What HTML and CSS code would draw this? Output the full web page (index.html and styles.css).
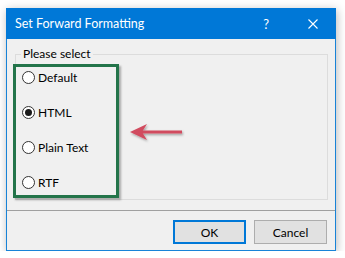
FILE: index.html
```html
<!DOCTYPE html>
<html>
<head>
<meta charset="utf-8">
<link rel="stylesheet" href="styles.css">
</head>
<body>
<div class="window">
  <div class="titlebar">
    <span class="title">Set Forward Formatting</span>
    <span class="help">?</span>
    <svg class="close" width="10" height="10" viewBox="0 0 10 10"><path d="M0.5 0.5 L9.5 9.5 M9.5 0.5 L0.5 9.5" stroke="#fff" stroke-width="1.1" fill="none"/></svg>
  </div>
  <div class="content">
    <div class="group">
      <span class="legend">Please select</span>
      <div class="options">
        <label class="opt"><span class="radio"></span><span>Default</span></label>
        <label class="opt"><span class="radio checked"></span><span>HTML</span></label>
        <label class="opt"><span class="radio"></span><span>Plain Text</span></label>
        <label class="opt"><span class="radio"></span><span>RTF</span></label>
      </div>
      <svg class="arrow" width="60" height="24" viewBox="0 0 60 24">
        <defs>
          <filter id="sh" x="-20%" y="-40%" width="140%" height="180%">
            <feDropShadow dx="1" dy="1.5" stdDeviation="0.8" flood-color="#000" flood-opacity="0.35"/>
          </filter>
        </defs>
        <g filter="url(#sh)" fill="#d14b5f">
          <rect x="14" y="9.5" width="40" height="3"/>
          <path d="M2 11 L19 3 L14 11 L19 19 Z"/>
        </g>
      </svg>
    </div>
  </div>
  <div class="footer">
    <button class="btn default">OK</button>
    <button class="btn">Cancel</button>
  </div>
</div>
</body>
</html>
```
FILE: styles.css
```css
* { box-sizing: border-box; }
body {
  margin: 0;
  background: #ffffff;
  font-family: Lato, "Noto Sans", sans-serif;
  font-size: 12px;
  color: #000;
}
.window {
  margin: 8px 0 0 6px;
  width: 330px;
  height: 243px;
  border: 1px solid #1883d7;
  background: #f0f0f0;
  display: flex;
  flex-direction: column;
  box-shadow: 1px 2px 9px rgba(0,0,0,0.28);
}
.titlebar {
  height: 31px;
  margin: -1px -1px 0 -1px;
  background: #0078d7;
  color: #fff;
  display: flex;
  align-items: center;
  padding-left: 9px;
  font-size: 12.5px;
}
.title { flex: 1; }
.help {
  font-size: 13px;
  margin-right: 39px;
}
.close {
  margin-right: 18px;
}
.content {
  flex: 1;
  padding: 15px 7px 0 8px;
}
.group {
  position: relative;
  height: 146px;
  border: 1px solid #dcdcdc;
}
.legend {
  position: absolute;
  top: -9px;
  left: 5px;
  padding: 0 2px;
  background: #f0f0f0;
  line-height: 16px;
}
.options {
  margin: 9px 0 0 -3px;
  width: 106px;
  height: 134px;
  border: 3px solid #23744a;
  box-shadow: 2px 2px 2px rgba(0,0,0,0.3);
  padding: 0 0 0 6px;
  display: flex;
  flex-direction: column;
  gap: 14px;
}
.opt {
  height: 21px;
  display: flex;
  align-items: center;
  gap: 3px;
}
.radio {
  width: 13px;
  height: 13px;
  border: 1px solid #333;
  border-radius: 50%;
  background: #fff;
  display: flex;
  align-items: center;
  justify-content: center;
}
.radio.checked::after {
  content: "";
  width: 7px;
  height: 7px;
  border-radius: 50%;
  background: #1a1a1a;
}
.arrow {
  position: absolute;
  left: 112px;
  top: 66px;
}
.footer {
  border-top: 1px solid #a0a0a0;
  height: 40px;
  display: flex;
  justify-content: flex-end;
  gap: 8px;
  padding: 9px 8px 0 0;
}
.btn {
  width: 73px;
  height: 24px;
  background: #e1e1e1;
  border: 1px solid #adadad;
  font-family: inherit;
  font-size: 12px;
  color: #000;
  padding: 0;
}
.btn.default {
  border: 2px solid #0078d7;
}
```
